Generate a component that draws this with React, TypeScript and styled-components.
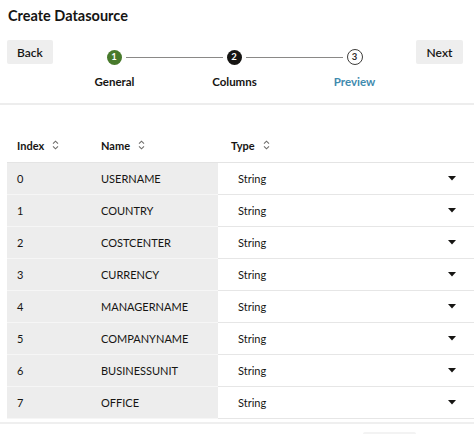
import React from "react";
import styled, { createGlobalStyle } from "styled-components";

const Global = createGlobalStyle`
  html, body { margin: 0; padding: 0; background: #ffffff; }
  body { font-family: Lato, "Noto Sans", "Liberation Sans", sans-serif; color: #161513; overflow: hidden; }
  * { box-sizing: border-box; }
`;

const Page = styled.div`
  width: 474px;
  height: 434px;
  overflow: hidden;
`;

const Title = styled.h1`
  margin: 0;
  padding: 7px 0 0 8px;
  font-size: 14.5px;
  font-weight: 700;
  line-height: 18px;
`;

const Header = styled.div`
  display: flex;
  justify-content: space-between;
  align-items: flex-start;
  padding: 15px 11px 0 7px;
  height: 80px;
  border-bottom: 2px solid #ededed;
`;

const Button = styled.button<{ $w: number }>`
  width: ${(p) => p.$w}px;
  height: 24px;
  border: none;
  border-radius: 2px;
  background: #eeeeee;
  color: #161513;
  font-family: inherit;
  font-size: 12px;
  font-weight: 600;
  padding: 0;
`;

const Stepper = styled.div`
  width: 360px;
  padding-top: 9px;
  display: flex;
  flex-direction: column;
`;

const Track = styled.div`
  display: flex;
  align-items: center;
  margin: 0 52px 0 52px;
  height: 16px;
`;

const Circle = styled.div<{ $kind: "done" | "current" | "todo" }>`
  width: ${(p) => (p.$kind === "todo" ? 16 : 15)}px;
  height: ${(p) => (p.$kind === "todo" ? 16 : 15)}px;
  border-radius: 50%;
  flex: none;
  display: flex;
  align-items: center;
  justify-content: center;
  font-size: 9.5px;
  font-weight: 700;
  line-height: 1;
  background: ${(p) =>
    p.$kind === "done" ? "#487a2c" : p.$kind === "current" ? "#161513" : "#ffffff"};
  color: ${(p) => (p.$kind === "todo" ? "#2f2e2c" : "#ffffff")};
  border: ${(p) => (p.$kind === "todo" ? "1.6px solid #3e3d3b" : "none")};
`;

const Connector = styled.div`
  flex: 1;
  height: 1px;
  background: #8a8987;
  margin: 0 4px;
`;

const Labels = styled.div`
  display: grid;
  grid-template-columns: repeat(3, 120px);
  margin-top: 10px;
`;

const StepLabel = styled.div<{ $link?: boolean }>`
  text-align: center;
  font-size: 11.5px;
  font-weight: 700;
  color: ${(p) => (p.$link ? "#3f8aae" : "#161513")};
`;

const TableWrap = styled.div`
  margin: 24px 0 0 7px;
`;

const Table = styled.table`
  width: 467px;
  border-collapse: collapse;
  table-layout: fixed;
  font-size: 11px;
`;

const Th = styled.th<{ $w?: number; $pl: number }>`
  width: ${(p) => (p.$w ? `${p.$w}px` : "auto")};
  height: 33px;
  padding: 0 0 0 ${(p) => p.$pl}px;
  text-align: left;
  font-weight: 700;
  border-bottom: 1px solid #e4e4e4;
`;

const HeadInner = styled.span`
  display: inline-flex;
  align-items: center;
  gap: 8px;
`;

const Td = styled.td<{ $gray?: boolean }>`
  height: 32px;
  padding: 0 0 0 10px;
  background: ${(p) => (p.$gray ? "#ededed" : "#ffffff")};
  border-bottom: 1px solid ${(p) => (p.$gray ? "#f6f6f6" : "#e6e6e6")};
`;

const TypeTd = styled(Td)`
  padding: 0;
`;

const SelectCell = styled.div`
  display: flex;
  align-items: center;
  justify-content: space-between;
  padding: 0 18px 0 20px;
`;

const Footer = styled.div`
  margin-top: 3px;
  border-top: 2px solid #efefef;
  display: flex;
  justify-content: flex-end;
  padding: 8px 58px 0 0;
`;

const FooterButton = styled.div`
  width: 53px;
  height: 24px;
  background: #f3f3f3;
  border-radius: 2px;
`;

const SortIcon = () => (
  <svg width="7" height="10" viewBox="0 0 7 10" fill="none" stroke="#6f6e6c" strokeWidth="1.1">
    <path d="M1 3.6 L3.5 1.2 L6 3.6" />
    <path d="M1 6.4 L3.5 8.8 L6 6.4" />
  </svg>
);

const Caret = () => (
  <svg width="8" height="5" viewBox="0 0 8 5">
    <path d="M0 0 H8 L4 4.5 Z" fill="#161513" />
  </svg>
);

const names = [
  "USERNAME",
  "COUNTRY",
  "COSTCENTER",
  "CURRENCY",
  "MANAGERNAME",
  "COMPANYNAME",
  "BUSINESSUNIT",
  "OFFICE",
];

export default function App() {
  return (
    <Page>
      <Global />
      <Title>Create Datasource</Title>
      <Header>
        <Button $w={46}>Back</Button>
        <Stepper>
          <Track>
            <Circle $kind="done">1</Circle>
            <Connector />
            <Circle $kind="current">2</Circle>
            <Connector />
            <Circle $kind="todo">3</Circle>
          </Track>
          <Labels>
            <StepLabel>General</StepLabel>
            <StepLabel>Columns</StepLabel>
            <StepLabel $link>Preview</StepLabel>
          </Labels>
        </Stepper>
        <Button $w={47}>Next</Button>
      </Header>
      <TableWrap>
        <Table>
          <thead>
            <tr>
              <Th $w={84} $pl={10}>
                <HeadInner>Index <SortIcon /></HeadInner>
              </Th>
              <Th $w={127} $pl={10}>
                <HeadInner>Name <SortIcon /></HeadInner>
              </Th>
              <Th $pl={13}>
                <HeadInner>Type <SortIcon /></HeadInner>
              </Th>
            </tr>
          </thead>
          <tbody>
            {names.map((n, i) => (
              <tr key={n}>
                <Td $gray>{i}</Td>
                <Td $gray>{n}</Td>
                <TypeTd>
                  <SelectCell>
                    <span>String</span>
                    <Caret />
                  </SelectCell>
                </TypeTd>
              </tr>
            ))}
          </tbody>
        </Table>
      </TableWrap>
      <Footer>
        <FooterButton />
      </Footer>
    </Page>
  );
}
